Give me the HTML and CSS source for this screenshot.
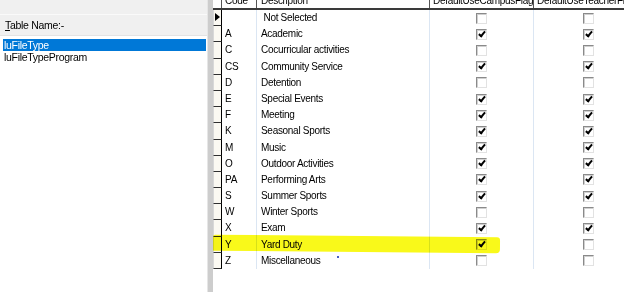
FILE: index.html
```html
<!DOCTYPE html>
<html lang="en">
<head>
    <meta charset="UTF-8">
    <title>Lookup Tables</title>
    <link rel="stylesheet" href="styles.css">
</head>
<body>
    <div class="window">
        <!-- Tables list -->
        <div class="side">
            <div class="side-top"></div>
            <div class="side-label"><u>T</u>able Name:-</div>
            <ul class="table-list">
                <li class="selected">luFileType</li>
                <li>luFileTypeProgram</li>
            </ul>
        </div>

        <div class="splitter"></div>

        <!-- Data grid -->
        <div class="grid">
            <div class="row head">
                <span class="sel"></span>
                <span class="code"><b>Code</b></span>
                <span class="desc"><b>Description</b></span>
                <span class="flag"><b>DefaultUseCampusFlag</b></span>
                <span class="flag wide"><b>DefaultUseTeacherFlag</b></span>
            </div>
            <div class="row current">
                <span class="sel"></span>
                <span class="code"></span>
                <span class="desc">&nbsp;Not Selected</span>
                <span class="flag"><i class="chk"></i></span>
                <span class="flag wide"><i class="chk"></i></span>
            </div>
            <div class="row">
                <span class="sel"></span>
                <span class="code">A</span>
                <span class="desc">Academic</span>
                <span class="flag"><i class="chk on"></i></span>
                <span class="flag wide"><i class="chk on"></i></span>
            </div>
            <div class="row">
                <span class="sel"></span>
                <span class="code">C</span>
                <span class="desc">Cocurricular activities</span>
                <span class="flag"><i class="chk"></i></span>
                <span class="flag wide"><i class="chk"></i></span>
            </div>
            <div class="row">
                <span class="sel"></span>
                <span class="code">CS</span>
                <span class="desc">Community Service</span>
                <span class="flag"><i class="chk on"></i></span>
                <span class="flag wide"><i class="chk on"></i></span>
            </div>
            <div class="row">
                <span class="sel"></span>
                <span class="code">D</span>
                <span class="desc">Detention</span>
                <span class="flag"><i class="chk"></i></span>
                <span class="flag wide"><i class="chk"></i></span>
            </div>
            <div class="row">
                <span class="sel"></span>
                <span class="code">E</span>
                <span class="desc">Special Events</span>
                <span class="flag"><i class="chk on"></i></span>
                <span class="flag wide"><i class="chk on"></i></span>
            </div>
            <div class="row">
                <span class="sel"></span>
                <span class="code">F</span>
                <span class="desc">Meeting</span>
                <span class="flag"><i class="chk on"></i></span>
                <span class="flag wide"><i class="chk on"></i></span>
            </div>
            <div class="row">
                <span class="sel"></span>
                <span class="code">K</span>
                <span class="desc">Seasonal Sports</span>
                <span class="flag"><i class="chk on"></i></span>
                <span class="flag wide"><i class="chk on"></i></span>
            </div>
            <div class="row">
                <span class="sel"></span>
                <span class="code">M</span>
                <span class="desc">Music</span>
                <span class="flag"><i class="chk on"></i></span>
                <span class="flag wide"><i class="chk on"></i></span>
            </div>
            <div class="row">
                <span class="sel"></span>
                <span class="code">O</span>
                <span class="desc">Outdoor Activities</span>
                <span class="flag"><i class="chk on"></i></span>
                <span class="flag wide"><i class="chk on"></i></span>
            </div>
            <div class="row">
                <span class="sel"></span>
                <span class="code">PA</span>
                <span class="desc">Performing Arts</span>
                <span class="flag"><i class="chk on"></i></span>
                <span class="flag wide"><i class="chk on"></i></span>
            </div>
            <div class="row">
                <span class="sel"></span>
                <span class="code">S</span>
                <span class="desc">Summer Sports</span>
                <span class="flag"><i class="chk on"></i></span>
                <span class="flag wide"><i class="chk on"></i></span>
            </div>
            <div class="row">
                <span class="sel"></span>
                <span class="code">W</span>
                <span class="desc">Winter Sports</span>
                <span class="flag"><i class="chk"></i></span>
                <span class="flag wide"><i class="chk"></i></span>
            </div>
            <div class="row">
                <span class="sel"></span>
                <span class="code">X</span>
                <span class="desc">Exam</span>
                <span class="flag"><i class="chk on"></i></span>
                <span class="flag wide"><i class="chk on"></i></span>
            </div>
            <div class="row">
                <span class="sel"></span>
                <span class="code">Y</span>
                <span class="desc">Yard Duty</span>
                <span class="flag"><i class="chk on"></i></span>
                <span class="flag wide"><i class="chk"></i></span>
            </div>
            <div class="row">
                <span class="sel"></span>
                <span class="code">Z</span>
                <span class="desc">Miscellaneous</span>
                <span class="flag"><i class="chk"></i></span>
                <span class="flag wide"><i class="chk"></i></span>
            </div>

            <!-- highlighter mark drawn over the Yard Duty row -->
            <div class="marker"></div>
            <div class="speck"></div>
        </div>
    </div>
</body>
</html>
```

FILE: styles.css
```css
/* General */
body {
    margin: 0;
    font-family: 'Liberation Sans', Arial, sans-serif;
    font-size: 10px;
    letter-spacing: -0.3px;
    color: #000;
    background: #ffffff;
}

.window {
    display: flex;
    width: 624px;
    height: 292px;
    overflow: hidden;
}

/* Left side: tables list */
.side {
    width: 207px;
    display: flex;
    flex-direction: column;
    background: #ffffff;
}

.side-top {
    height: 14px;
    background: #f0f0f0;
    border-bottom: 1px solid #fafafa;
}

.side-label {
    height: 20px;
    line-height: 20px;
    padding-left: 5px;
    background: #f0f0f0;
    border-bottom: 1px solid #e3e3e3;
    font-size: 10.5px;
}

.table-list {
    list-style: none;
    margin: 0;
    padding: 3px 1px 0 3px;
}

.table-list li {
    height: 12px;
    line-height: 12px;
    padding-left: 1px;
    font-size: 10.5px;
}

.table-list li.selected {
    background: #0078d7;
    color: #ffffff;
}

.splitter {
    width: 5px;
    background: #cdcdcd;
    border-left: 1px solid #e6e6e6;
}

/* Grid */
.grid {
    position: relative;
    flex: 1;
    overflow: hidden;
    background: #ffffff;
}

.row {
    display: flex;
    height: 16.2px;
    line-height: 16px;
    white-space: nowrap;
}

.row > span {
    flex: none;
    box-sizing: border-box;
    height: 100%;
    overflow: hidden;
}

.sel {
    width: 9px;
    background: #fbf9f2;
    border-right: 1px solid #000;
    border-bottom: 1px solid #303030;
    border-left: 1px solid #d8d8d8;
}

.code {
    width: 35px;
    padding-left: 3px;
    border-right: 1px solid #dbe6f3;
}

.desc {
    width: 173px;
    padding-left: 4px;
    border-right: 1px solid #dbe6f3;
}

.flag {
    width: 104px;
    display: flex;
    align-items: center;
    justify-content: center;
    border-right: 1px solid #dbe6f3;
}

.flag.wide {
    width: 110px;
}

/* Header, scrolled so only the lower half of its labels shows */
.row.head {
    height: 10px;
    border-bottom: 2px solid #3a3a3a;
    box-sizing: border-box;
}

.row.head > span {
    border-right: 1px solid #555;
    display: block;
}

.row.head .sel {
    background: #ffffff;
    border-bottom: none;
    border-left: none;
}

.row.head b {
    display: block;
    font-weight: normal;
    line-height: 12px;
    margin-top: -5px;
}

.row.head .flag b {
    padding-left: 3px;
}

.row.current .sel {
    position: relative;
}

.row.current .sel::after {
    content: "";
    position: absolute;
    left: 1px;
    top: 3px;
    border-left: 5px solid #000;
    border-top: 4.5px solid transparent;
    border-bottom: 4.5px solid transparent;
}

/* Checkboxes */
.chk {
    position: relative;
    width: 9px;
    height: 9px;
    background: #ffffff;
    border-top: 1px solid #8a8a8a;
    border-left: 1px solid #8a8a8a;
    border-right: 1px solid #e2e2e2;
    border-bottom: 1px solid #e2e2e2;
    box-shadow: inset 1px 1px 0 #d0d0d0;
}

.chk.on::after {
    content: "";
    position: absolute;
    left: 3px;
    top: 0;
    width: 2px;
    height: 5px;
    border-right: 2px solid #000;
    border-bottom: 2px solid #000;
    transform: rotate(40deg);
}

/* Yellow highlighter stroke */
.marker {
    position: absolute;
    left: 0;
    top: 236px;
    width: 287px;
    height: 16px;
    background: #f9f91a;
    mix-blend-mode: multiply;
    transform: rotate(0.5deg);
    border-radius: 2px 3px 4px 1px;
}

.speck {
    position: absolute;
    left: 124px;
    top: 256px;
    width: 2px;
    height: 2px;
    background: #4a5fc0;
}
```
